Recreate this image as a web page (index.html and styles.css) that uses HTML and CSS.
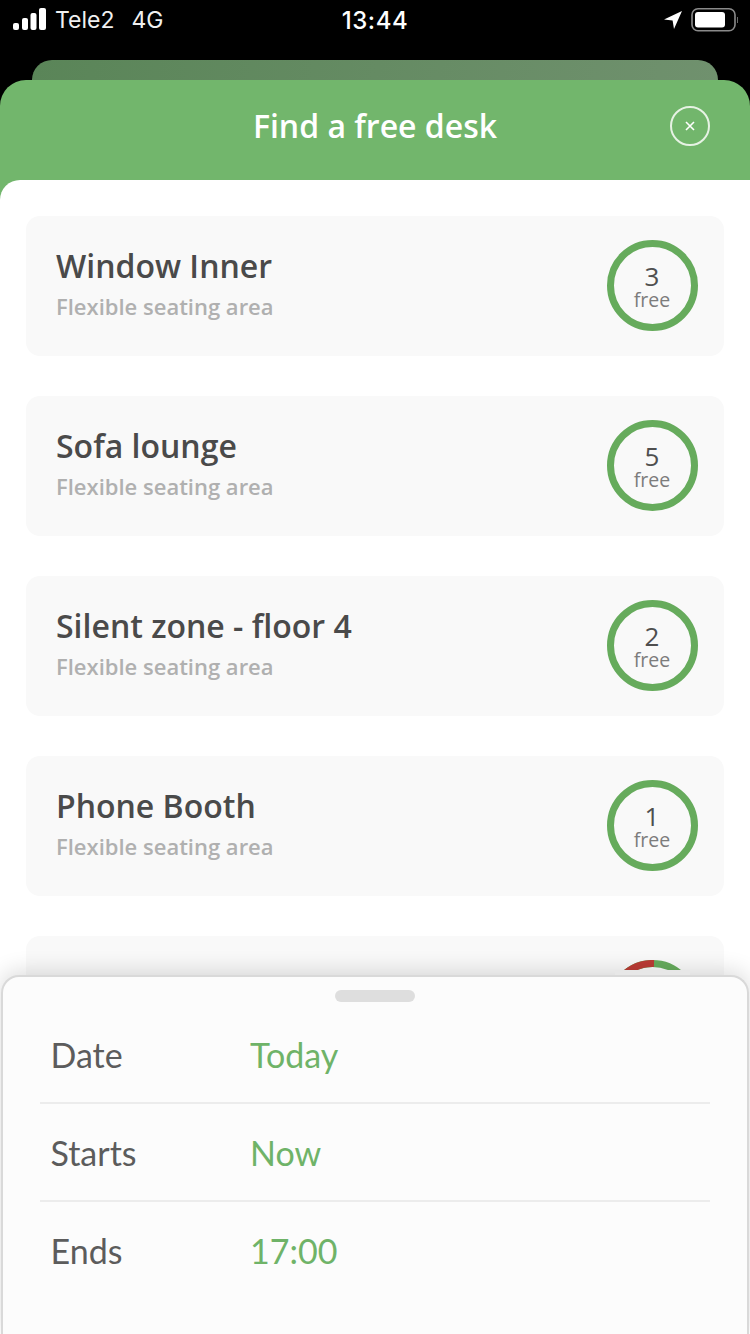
FILE: index.html
```html
<!DOCTYPE html>
<html lang="en">
<head>
  <meta charset="UTF-8">
  <meta name="viewport" content="width=device-width, initial-scale=1.0">
  <title>Find a free desk</title>
  <link rel="stylesheet" href="styles.css">
</head>
<body>
  <div class="phone">
    <div class="status">
      <div class="status-left">
        <svg class="signal" width="33" height="22" viewBox="0 0 33 22">
          <rect x="0" y="15" width="6" height="7" rx="2" fill="#fff"/>
          <rect x="9" y="10" width="6" height="12" rx="2" fill="#fff"/>
          <rect x="17.500" y="5" width="6" height="17" rx="2" fill="#fff"/>
          <rect x="26" y="0" width="7" height="22" rx="2" fill="#fff"/>
        </svg>
        <span class="carrier">Tele2</span>
        <span class="network">4G</span>
      </div>
      <div class="clock">13:44</div>
      <div class="status-right">
        <svg class="arrow" width="18" height="18" viewBox="0 0 18 18">
          <path d="M18 0 L0 8.5 L8.6 9.4 L10 18 Z" fill="#fff"/>
        </svg>
        <svg class="battery" width="48" height="24" viewBox="0 0 48 24">
          <rect x="2" y="0.800" width="43" height="22" rx="6" fill="none" stroke="#8a8a8a" stroke-width="1.600"/>
          <rect x="5" y="4" width="30" height="15.500" rx="3" fill="#fff"/>
          <path d="M47 9 a2.500 2.500 0 0 1 0 6 z" fill="#6a6a6a"/>
        </svg>
      </div>
    </div>

    <div class="back-card"></div>

    <div class="modal">
      <header class="modal-head">
        <h1>Find a free desk</h1>
        <button class="close" type="button">
          <svg width="10" height="10" viewBox="0 0 10 10">
            <path d="M1 1 L9 9 M9 1 L1 9" stroke="#fff" stroke-width="1.600" fill="none"/>
          </svg>
        </button>
      </header>

      <main class="areas">
        <div class="area">
          <div class="area-text">
            <div class="area-name">Window Inner</div>
            <div class="area-type">Flexible seating area</div>
          </div>
          <div class="ring"><span class="ring-num">3</span><span class="ring-label">free</span></div>
        </div>
        <div class="area">
          <div class="area-text">
            <div class="area-name">Sofa lounge</div>
            <div class="area-type">Flexible seating area</div>
          </div>
          <div class="ring"><span class="ring-num">5</span><span class="ring-label">free</span></div>
        </div>
        <div class="area">
          <div class="area-text">
            <div class="area-name">Silent zone - floor 4</div>
            <div class="area-type">Flexible seating area</div>
          </div>
          <div class="ring"><span class="ring-num">2</span><span class="ring-label">free</span></div>
        </div>
        <div class="area">
          <div class="area-text">
            <div class="area-name">Phone Booth</div>
            <div class="area-type">Flexible seating area</div>
          </div>
          <div class="ring"><span class="ring-num">1</span><span class="ring-label">free</span></div>
        </div>
        <div class="area">
          <div class="area-text"></div>
          <svg class="ring-split" width="91" height="91" viewBox="0 0 91 91">
            <circle cx="45.500" cy="45.500" r="42" fill="none" stroke="#66ab5c" stroke-width="7"/>
            <path d="M47 3.500 A42 42 0 0 0 10 23" fill="none" stroke="#bb3c35" stroke-width="7"/>
          </svg>
        </div>
      </main>
    </div>

    <div class="sheet">
      <div class="handle"></div>
      <div class="row">
        <span class="row-label">Date</span>
        <span class="row-value">Today</span>
      </div>
      <div class="row">
        <span class="row-label">Starts</span>
        <span class="row-value">Now</span>
      </div>
      <div class="row">
        <span class="row-label">Ends</span>
        <span class="row-value">17:00</span>
      </div>
    </div>
  </div>
</body>
</html>
```

FILE: styles.css
```css
* {
  box-sizing: border-box;
}

html, body {
  margin: 0;
  padding: 0;
}

body {
  background-color: #000;
  font-family: 'Open Sans', sans-serif;
}

.phone {
  position: relative;
  width: 750px;
  height: 1334px;
  overflow: hidden;
  background-color: #000;
}

/* status bar */
.status {
  height: 60px;
  padding: 0 12px 20px 13px;
  display: flex;
  align-items: center;
  justify-content: space-between;
  position: relative;
  color: #fff;
  font-family: 'Inter', sans-serif;
  font-size: 22px;
}

.status-left {
  display: flex;
  align-items: center;
}

.signal {
  margin-top: -2px;
}

.carrier {
  margin-left: 9px;
  font-size: 23px;
  color: #f0f0f0;
}

.network {
  margin-left: 17px;
  font-size: 23px;
  color: #f0f0f0;
}

.clock {
  position: absolute;
  left: 0;
  right: 0;
  top: 6px;
  text-align: center;
  font-size: 24px;
  font-weight: 500;
  letter-spacing: 0.5px;
}

.status-right {
  display: flex;
  align-items: center;
  gap: 8px;
}

/* card peeking out behind the modal */
.back-card {
  height: 40px;
  margin: 0 32px -20px;
  border-radius: 20px 20px 0 0;
  background: linear-gradient(100deg, #5a8558, #70916e);
}

/* modal */
.modal {
  position: relative;
  height: 1254px;
  border-radius: 26px 26px 0 0;
  background-color: #72b66c;
}

.modal-head {
  height: 100px;
  padding-bottom: 9px;
  display: flex;
  align-items: center;
  justify-content: center;
  position: relative;
}

.modal-head h1 {
  margin: 0;
  color: #fff;
  font-size: 32px;
  font-weight: 600;
  line-height: 1;
}

.close {
  position: absolute;
  right: 40px;
  top: 26px;
  width: 40px;
  height: 40px;
  padding: 0;
  border: 2px solid #e6f2e4;
  border-radius: 50%;
  background: none;
  display: flex;
  align-items: center;
  justify-content: center;
}

.areas {
  height: 1154px;
  padding: 36px 26px 0;
  background-color: #fff;
  border-radius: 20px 0 0 0;
  display: flex;
  flex-direction: column;
  gap: 40px;
}

.area {
  flex: none;
  height: 140px;
  padding: 0 26.500px 0 30px;
  background-color: #f9f9f9;
  border-radius: 14px;
  display: flex;
  align-items: center;
  justify-content: space-between;
}

.area-text {
  margin-top: -6px;
}

.area-name {
  color: #4a4a4a;
  font-size: 32px;
  font-weight: 600;
  line-height: 40px;
}

.area-type {
  color: #b0b0b0;
  font-size: 22px;
  font-weight: 600;
  line-height: 28px;
  margin-top: 6px;
}

.ring {
  width: 91px;
  height: 91px;
  margin-top: -1px;
  border: 7px solid #66ab5c;
  border-radius: 50%;
  display: flex;
  flex-direction: column;
  align-items: center;
  justify-content: center;
}

.ring-num {
  color: #4f4f4f;
  font-size: 26px;
  line-height: 26px;
  margin-top: 2px;
}

.ring-label {
  color: #7c7c7c;
  font-size: 19.500px;
  line-height: 22px;
}

.ring-split {
  margin-top: -1px;
}

/* bottom sheet */
.sheet {
  position: absolute;
  left: 1px;
  right: 1px;
  top: 975px;
  bottom: 0;
  padding: 0 37px;
  background-color: #fcfcfc;
  border: 2px solid #d9d9d9;
  border-bottom: 0;
  border-radius: 18px 18px 0 0;
  box-shadow: 0 -4px 22px rgba(0, 0, 0, 0.14);
  font-family: 'Lato', sans-serif;
}

.sheet::before {
  content: "";
  position: absolute;
  right: 57px;
  top: -7px;
  width: 75px;
  height: 5px;
  background: linear-gradient(90deg, #e7e7e7, #e7e7e7);
}

.handle {
  width: 80px;
  height: 12px;
  margin: 13px auto 0;
  border-radius: 6px;
  background-color: #dedede;
}

.row {
  height: 98px;
  padding-top: 1px;
  display: flex;
  align-items: center;
  font-size: 34px;
  border-bottom: 2px solid #ececec;
}

.row:nth-child(2) {
  height: 102px;
  padding-top: 4px;
}

.row:last-child {
  padding-top: 0;
  padding-bottom: 1px;
  border-bottom: 0;
}

.row-label {
  width: 210px;
  padding-left: 10.500px;
  color: #5c5c5c;
}

.row-value {
  color: #6fb368;
}
```
